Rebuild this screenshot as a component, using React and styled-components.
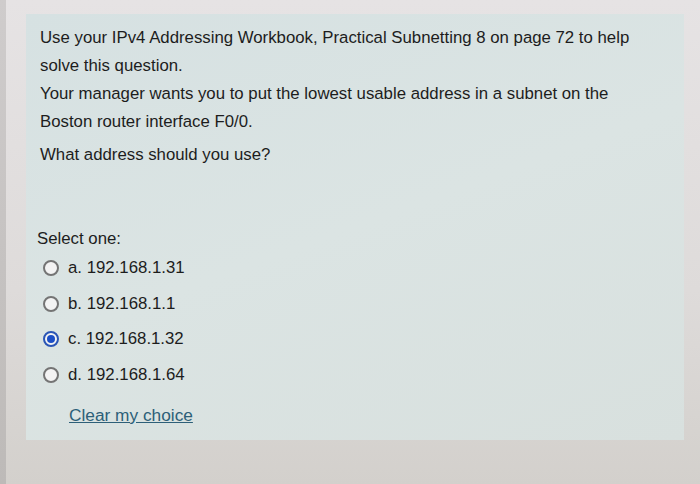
import styled, { createGlobalStyle } from "styled-components";

const Global = createGlobalStyle`
  html, body {
    margin: 0;
    padding: 0;
  }
  body {
    width: 700px;
    height: 484px;
    overflow: hidden;
    background: linear-gradient(180deg, #e6e3e4 0%, #dedbda 60%, #d3d0cc 100%);
    font-family: "Liberation Sans", Arial, sans-serif;
  }
`;

const Screen = styled.div`
  display: flex;
  height: 484px;
`;

const Bezel = styled.div`
  width: 6px;
  background: linear-gradient(180deg, #cfcccc, #bdbab8);
`;

const Page = styled.div`
  flex: 1;
  padding: 14px 16px 0 20px;
`;

const Panel = styled.section`
  height: 426px;
  box-sizing: border-box;
  padding: 10px 20px 0 14px;
  background: linear-gradient(160deg, #d6e1e2 0%, #dbe4e3 50%, #d8e0de 100%);
  color: #1d1d1d;
`;

const Question = styled.div`
  font-size: 16.8px;
  line-height: 28px;
  p {
    margin: 0;
  }
  p:last-child {
    margin-top: 5px;
  }
`;

const Answer = styled.div`
  margin-top: 59px;
  font-size: 16.8px;
`;

const Prompt = styled.div`
  margin-left: -3px;
  line-height: 22px;
`;

const Options = styled.div`
  display: flex;
  flex-direction: column;
  gap: 13.5px;
  margin: 7px 0 0 3px;
`;

const Option = styled.label`
  display: flex;
  align-items: center;
  gap: 9px;
  height: 22px;
`;

const Radio = styled.span`
  width: 16px;
  height: 16px;
  border-radius: 50%;
  box-sizing: border-box;
  border: 2px solid ${(p) => (p.$on ? "#2a55b5" : "#747474")};
  background: #f3f3f3;
  display: flex;
  align-items: center;
  justify-content: center;
  &::after {
    content: "";
    width: 8px;
    height: 8px;
    border-radius: 50%;
    background: ${(p) => (p.$on ? "#1c4fc6" : "transparent")};
  }
`;

const Clear = styled.a`
  display: inline-block;
  margin: 19px 0 0 29px;
  font-size: 17.3px;
  color: #2d5f78;
  text-decoration: underline;
`;

const options = [
  { key: "a", text: "192.168.1.31" },
  { key: "b", text: "192.168.1.1" },
  { key: "c", text: "192.168.1.32", on: true },
  { key: "d", text: "192.168.1.64" },
];

export default function App() {
  return (
    <>
      <Global />
      <Screen>
        <Bezel />
        <Page>
          <Panel>
            <Question>
              <p>
                Use your IPv4 Addressing Workbook, Practical Subnetting 8 on page 72 to help
                <br />
                solve this question.
              </p>
              <p>
                Your manager wants you to put the lowest usable address in a subnet on the
                <br />
                Boston router interface F0/0.
              </p>
              <p>What address should you use?</p>
            </Question>
            <Answer>
              <Prompt>Select one:</Prompt>
              <Options>
                {options.map((o) => (
                  <Option key={o.key}>
                    <Radio $on={o.on} />
                    <span>
                      {o.key}. {o.text}
                    </span>
                  </Option>
                ))}
              </Options>
              <Clear href="#">Clear my choice</Clear>
            </Answer>
          </Panel>
        </Page>
      </Screen>
    </>
  );
}
